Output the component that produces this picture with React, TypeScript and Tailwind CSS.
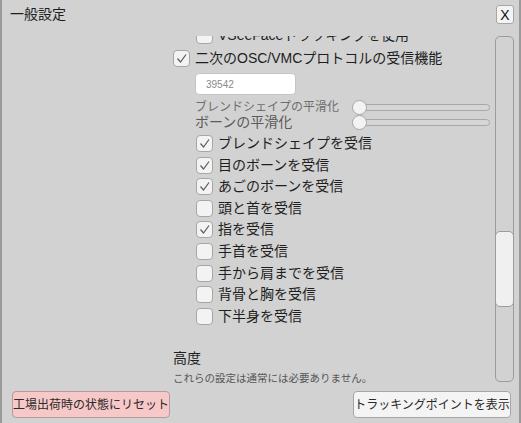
import React from "react";

const font = { fontFamily: '"Liberation Sans", "Noto Sans CJK JP", sans-serif' };

function Check({ checked }: { checked?: boolean }) {
  return (
    <div className="w-[17px] h-[17px] shrink-0 rounded-[4px] border border-[#a6a6a6] bg-[#f3f3f3] flex items-center justify-center">
      {checked && (
        <svg width="13" height="13" viewBox="0 0 13 13">
          <polyline points="2.5,6.5 5.5,10 11,2.5" fill="none" stroke="#5a5a5a" strokeWidth="1.2" />
        </svg>
      )}
    </div>
  );
}

function CheckRow({ label, checked }: { label: string; checked?: boolean }) {
  return (
    <div className="flex items-center h-[17px]">
      <Check checked={checked} />
      <span className="ml-[5px] text-[14px] leading-[17px] text-[#1e1e1e] whitespace-nowrap">{label}</span>
    </div>
  );
}

function Slider() {
  return (
    <div className="relative w-[138px] h-[15px] flex items-center">
      <div className="w-full h-[7px] rounded-full border border-[#a8a8a8] bg-[#d6d6d6]" />
      <div className="absolute left-0 top-0 w-[15px] h-[15px] rounded-full border border-[#a8a8a8] bg-[#f3f3f3]" />
    </div>
  );
}

const receive: [string, boolean][] = [
  ["ブレンドシェイプを受信", true],
  ["目のボーンを受信", true],
  ["あごのボーンを受信", true],
  ["頭と首を受信", false],
  ["指を受信", true],
  ["手首を受信", false],
  ["手から肩までを受信", false],
  ["背骨と胸を受信", false],
  ["下半身を受信", false],
];

export default function App() {
  return (
    <div
      className="w-[521px] h-[423px] bg-[#d2d2d2] border-l-2 border-r-2 border-[#9a9a9a] flex flex-col overflow-hidden"
      style={font}
    >
      <div className="h-[36px] shrink-0 flex items-start justify-between pl-[8px] pr-[5px]">
        <span className="mt-[5px] text-[14px] leading-[18px] text-[#1e1e1e]">一般設定</span>
        <div className="mt-[5px] w-[18px] h-[19px] rounded-[3px] border border-[#a6a6a6] bg-[#f4f4f4] flex items-center justify-center text-[14px] leading-none text-[#111]">
          X
        </div>
      </div>

      <div className="h-[352px] shrink-0 flex items-start">
        <div className="flex-1 h-full overflow-hidden">
          <div className="mt-[-9px] pl-[171px] flex flex-col">
            <div className="pl-[23px]">
              <CheckRow label="VSeeFaceトラッキングを使用" />
            </div>
            <div className="mt-[6px]">
              <CheckRow label="二次のOSC/VMCプロトコルの受信機能" checked />
            </div>
            <div className="pl-[22px] flex flex-col">
              <div className="mt-[6px] w-[101px] h-[22px] rounded-[4px] border border-[#c4c4c4] bg-white flex items-center pl-[10px] text-[10px] text-[#8a8a8a]">
                39542
              </div>
              <div className="mt-[5px] flex items-center justify-between w-[295px] h-[14px]">
                <span className="text-[12px] leading-[14px] text-[#6e6e6e]">ブレンドシェイプの平滑化</span>
                <Slider />
              </div>
              <div className="mt-[1px] flex items-center justify-between w-[295px] h-[15px]">
                <span className="text-[14px] leading-[15px] text-[#5a5a5a]">ボーンの平滑化</span>
                <Slider />
              </div>
              <div className="mt-[5px] pl-[1px] flex flex-col gap-[4.6px]">
                {receive.map(([label, checked]) => (
                  <CheckRow key={label} label={label} checked={checked} />
                ))}
              </div>
            </div>
            <div className="mt-[25px] text-[14px] leading-[17px] text-[#1e1e1e]">高度</div>
            <div className="mt-[5px] text-[10.5px] leading-[12px] text-[#555] whitespace-nowrap">
              これらの設定は通常には必要ありません。
            </div>
          </div>
        </div>
        <div className="w-[19px] mr-[5px] h-[346px] rounded-[5px] border border-[#9c9c9c] bg-[#d2d2d2] flex flex-col">
          <div className="mt-[194px] h-[76px] rounded-[5px] border border-[#9c9c9c] bg-[#f0f0f0] -mx-px" />
        </div>
      </div>

      <div className="flex-1 flex items-start justify-between pl-[10px] pr-[8px] pt-[3px]">
        <div className="w-[158px] h-[27px] rounded-[4px] border border-[#b89a9a] bg-[#f6c8c8] flex items-center justify-center text-[12px] text-[#2a2a2a] whitespace-nowrap">
          工場出荷時の状態にリセット
        </div>
        <div className="w-[158px] h-[27px] rounded-[4px] border border-[#a6a6a6] bg-[#f4f4f4] flex items-center justify-center text-[12px] text-[#2a2a2a] whitespace-nowrap">
          トラッキングポイントを表示
        </div>
      </div>
    </div>
  );
}
